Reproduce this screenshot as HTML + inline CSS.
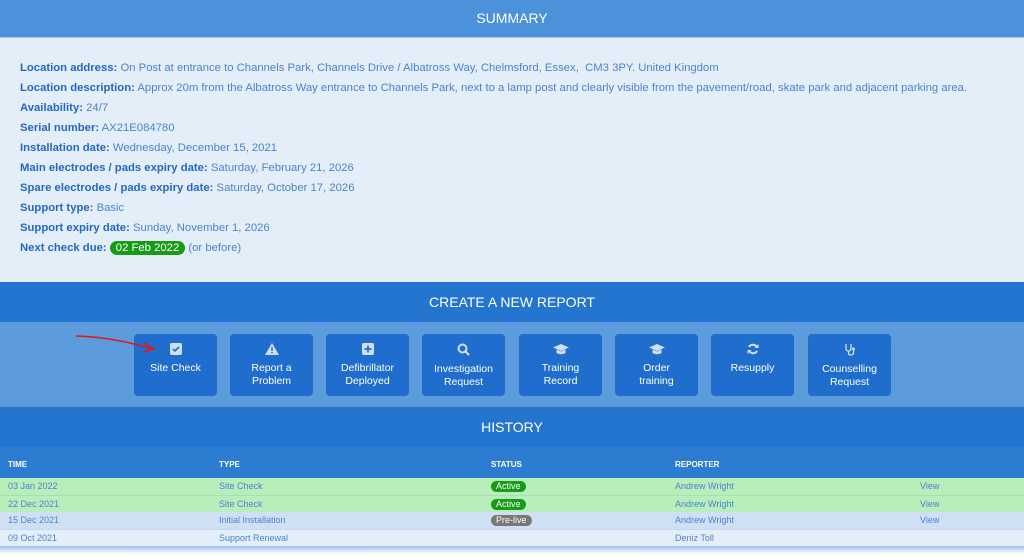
<!DOCTYPE html>
<html><head><meta charset="utf-8"><style>
*{margin:0;padding:0;box-sizing:border-box}
body{width:1024px;height:560px;overflow:hidden;background:#fff;font-family:"Liberation Sans",sans-serif;position:relative}
.hdr{position:absolute;left:0;width:1024px;color:#fff;text-align:center;font-size:14px}
.sum{top:0;height:37px;line-height:36px;background:#4b92da}
.body{position:absolute;top:37px;left:0;width:1024px;height:245px;background:#e3eef9;border-top:1px solid #a8c8ec}
.line{position:absolute;left:20px;font-size:11.3px;color:#4a84cf;white-space:nowrap}
.line b{color:#2468c4}
.pill{background:#169c16;color:#fff;border-radius:8px;padding:1px 6px;}
.cr{top:282px;height:40px;line-height:40px;background:#2475cf}
.band{position:absolute;top:322px;left:0;width:1024px;height:85px;background:#5c9cdc}
.btn{position:absolute;top:12px;width:83px;height:62px;background:#1f6ecd;border-radius:4px;color:#fff;font-size:10.5px;text-align:center;line-height:13px}
.btn svg{display:block;margin:9px auto 7px}
.his{top:407px;height:40px;line-height:40px;background:#2475cf}
.th{position:absolute;top:447px;left:0;width:1024px;height:31px;background:#2c7dd2;color:#fff;font-size:8px;font-weight:bold}
.th span,.r span{position:absolute}
.r{position:absolute;left:0;width:1024px;height:17px;font-size:9px;color:#4a84cf;line-height:17px}
.b{color:#fff;border-radius:6px;padding:0 5px;font-size:9px;line-height:11px;top:3px}
</style></head><body>
<div class="hdr sum">SUMMARY</div>
<div class="body">
<div class="line" style="top:24px"><b>Location address:</b> On Post at entrance to Channels Park, Channels Drive / Albatross Way, Chelmsford, Essex,&nbsp; CM3 3PY. United Kingdom</div>
<div class="line" style="top:44px"><b>Location description:</b> Approx 20m from the Albatross Way entrance to Channels Park, next to a lamp post and clearly visible from the pavement/road, skate park and adjacent parking area.</div>
<div class="line" style="top:64px"><b>Availability:</b> 24/7</div>
<div class="line" style="top:84px"><b>Serial number:</b> AX21E084780</div>
<div class="line" style="top:104px"><b>Installation date:</b> Wednesday, December 15, 2021</div>
<div class="line" style="top:124px"><b>Main electrodes / pads expiry date:</b> Saturday, February 21, 2026</div>
<div class="line" style="top:144px"><b>Spare electrodes / pads expiry date:</b> Saturday, October 17, 2026</div>
<div class="line" style="top:164px"><b>Support type:</b> Basic</div>
<div class="line" style="top:184px"><b>Support expiry date:</b> Sunday, November 1, 2026</div>
<div class="line" style="top:204px"><b>Next check due:</b> <span class="pill">02 Feb 2022</span> (or before)</div>
</div>
<div class="hdr cr">CREATE A NEW REPORT</div>
<div class="band">
<div class="btn" style="left:134px"><svg width="12" height="12"><rect x="0" y="0" width="12" height="12" rx="2" fill="#cfe0f5"/><path d="M3 6 L5 8 L9 4" stroke="#1f6ecd" stroke-width="1.6" fill="none"/></svg>Site Check</div>
<div class="btn" style="left:230px"><svg width="14" height="12"><path d="M7 0 L14 12 L0 12Z" fill="#cfe0f5"/><rect x="6.3" y="4" width="1.4" height="4" fill="#1f6ecd"/><rect x="6.3" y="9" width="1.4" height="1.4" fill="#1f6ecd"/></svg>Report a<br>Problem</div>
<div class="btn" style="left:326px"><svg width="12" height="12"><rect width="12" height="12" rx="2" fill="#cfe0f5"/><path d="M6 2.5V9.5M2.5 6H9.5" stroke="#1f6ecd" stroke-width="1.8"/></svg>Defibrillator<br>Deployed</div>
<div class="btn" style="left:422px"><svg width="13" height="13"><circle cx="5.5" cy="5.5" r="4" stroke="#cfe0f5" stroke-width="2" fill="none"/><path d="M8.5 8.5L12 12" stroke="#cfe0f5" stroke-width="2.2"/></svg>Investigation<br>Request</div>
<div class="btn" style="left:519px"><svg width="16" height="12"><path d="M8 1 L16 4.5 L8 8 L0 4.5Z" fill="#cfe0f5"/><path d="M3.5 6.5 V10 Q8 12.5 12.5 10 V6.5 L8 8.5Z" fill="#cfe0f5"/></svg>Training<br>Record</div>
<div class="btn" style="left:615px"><svg width="16" height="12"><path d="M8 1 L16 4.5 L8 8 L0 4.5Z" fill="#cfe0f5"/><path d="M3.5 6.5 V10 Q8 12.5 12.5 10 V6.5 L8 8.5Z" fill="#cfe0f5"/></svg>Order<br>training</div>
<div class="btn" style="left:711px"><svg width="12" height="12"><path d="M10 4.5 A4.5 4.5 0 0 0 2 4" stroke="#cfe0f5" stroke-width="2" fill="none"/><path d="M2 7.5 A4.5 4.5 0 0 0 10 8" stroke="#cfe0f5" stroke-width="2" fill="none"/><path d="M11.5 1V5H7.5Z M0.5 11V7H4.5Z" fill="#cfe0f5"/></svg>Resupply</div>
<div class="btn" style="left:808px"><svg width="12" height="13"><path d="M2 1V5Q2 8 4.5 8Q7 8 7 5V1 M4.5 8V10Q4.5 12 7 12Q9.5 12 9.5 9V7" stroke="#cfe0f5" stroke-width="1.3" fill="none"/><circle cx="9.5" cy="6" r="1.5" fill="#cfe0f5"/></svg>Counselling<br>Request</div>
<svg style="position:absolute;left:74px;top:10px;z-index:2" width="82" height="22"><path d="M2 4 Q40 5 78 17" stroke="#e01818" stroke-width="1.5" fill="none"/><path d="M70 11 L80 17 L69 20" stroke="#e01818" stroke-width="1.5" fill="none"/></svg>
</div>
<div class="hdr his">HISTORY</div>
<div class="th"><span style="left:8px;top:13px">TIME</span><span style="left:219px;top:13px">TYPE</span><span style="left:491px;top:13px">STATUS</span><span style="left:675px;top:13px">REPORTER</span></div>
<div class="r" style="top:478px;background:#b8eebb"><span style="left:8px">03 Jan 2022</span><span style="left:219px">Site Check</span><span class="b" style="left:491px;background:#169c16">Active</span><span style="left:675px">Andrew Wright</span><span style="left:920px">View</span></div>
<div class="r" style="top:495px;background:#b8eebb;border-top:1px solid #a6e0aa"><span style="left:8px">22 Dec 2021</span><span style="left:219px">Site Check</span><span class="b" style="left:491px;background:#169c16">Active</span><span style="left:675px">Andrew Wright</span><span style="left:920px">View</span></div>
<div class="r" style="top:512px;background:#cfe0f4"><span style="left:8px">15 Dec 2021</span><span style="left:219px">Initial Installation</span><span class="b" style="left:491px;background:#777">Pre-live</span><span style="left:675px">Andrew Wright</span><span style="left:920px">View</span></div>
<div class="r" style="top:529px;background:#e3eef9;border-top:1px solid #c5d8ef"><span style="left:8px">09 Oct 2021</span><span style="left:219px">Support Renewal</span><span style="left:675px">Deniz Toll</span></div>
<div style="position:absolute;top:546px;left:0;width:1024px;height:8px;background:linear-gradient(#9fc2ea,#fff)"></div>
</body></html>
